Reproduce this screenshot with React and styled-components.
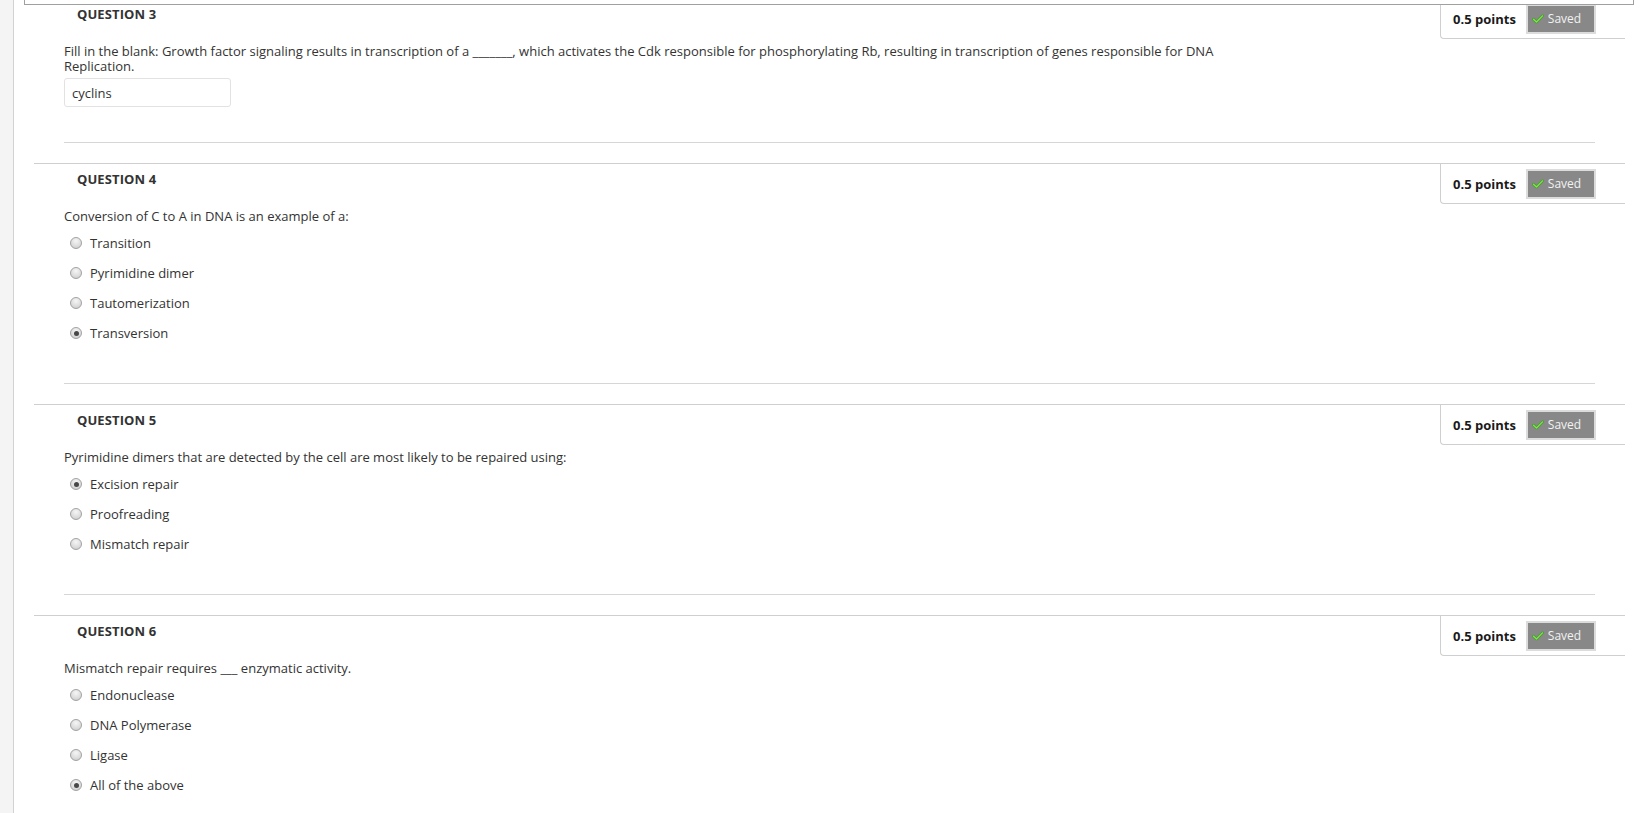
import React from "react";
import styled, { createGlobalStyle } from "styled-components";

const GlobalStyle = createGlobalStyle`
  html, body { margin: 0; padding: 0; background: #fff; }
  body { font-family: "Open Sans", "Liberation Sans", sans-serif; color: #333; }
  * { box-sizing: border-box; }
`;

const Page = styled.div`
  display: flex;
  height: 813px;
  overflow: hidden;
`;

const SideStrip = styled.div`
  width: 14px;
  flex: none;
  background: #f4f4f4;
  border-right: 1px solid #d2d2d2;
`;

const Main = styled.div`
  flex: 1;
  display: block;
`;

const TopBox = styled.div`
  position: relative;
  z-index: 1;
  margin-left: 10px;
  width: 1610px;
  height: 5px;
  background: #fff;
  border: 1px solid #a0a0a0;
  border-top: none;
`;

const Section = styled.section`
  position: relative;
  margin-left: 20px;
  width: 1591px;
  border-top: 1px solid #cfcfcf;
  margin-top: ${(p) => p.$offset || 0}px;
`;

const Header = styled.div`
  display: flex;
  justify-content: space-between;
  align-items: flex-start;
  height: 40px;
`;

const QuestionLabel = styled.h3`
  margin: 0;
  padding-left: 43px;
  font-size: 13px;
  line-height: 30px;
  font-weight: 700;
  color: #333;
  letter-spacing: 0.1px;
`;

const PointsBox = styled.div`
  width: 185px;
  height: 40px;
  display: flex;
  align-items: center;
  padding-left: 12px;
  border-left: 1px solid #cfcfcf;
  border-bottom: 1px solid #cfcfcf;
  border-bottom-left-radius: 4px;
`;

const Points = styled.span`
  font-size: 13px;
  font-weight: 700;
  color: #1a1a1a;
  white-space: nowrap;
`;

const SavedBadge = styled.span`
  margin-left: 10px;
  width: 70px;
  height: 30px;
  display: flex;
  align-items: center;
  padding-left: 4px;
  gap: 4px;
  background: #888;
  border: 2px solid #dcdcdc;
  color: #f2f2f2;
  font-size: 12px;
`;

const Body = styled.div`
  padding-left: 30px;
`;

const Prompt = styled.div`
  margin-top: 5px;
  max-width: 1190px;
  font-size: 13px;
  line-height: 15px;
  color: #333;
`;

const AnswerInput = styled.div`
  margin-top: 4px;
  width: 167px;
  height: 29px;
  border: 1px solid #e2e2e2;
  border-radius: 3px;
  padding: 0 7px;
  display: flex;
  align-items: center;
  font-size: 13px;
  color: #333;
`;

const Options = styled.div`
  margin-top: 4px;
  display: flex;
  flex-direction: column;
`;

const OptionRow = styled.label`
  height: 30px;
  display: flex;
  align-items: center;
  font-size: 13px;
  color: #333;
`;

const Radio = styled.span`
  width: 12px;
  height: 12px;
  margin-left: 6px;
  margin-right: 8px;
  border-radius: 50%;
  border: 1px solid #a2a2a2;
  background: radial-gradient(circle at 50% 30%, #f6f6f6 0%, #dcdcdc 60%, #c6c6c6 100%);
  display: flex;
  align-items: center;
  justify-content: center;
  flex: none;
  &::after {
    content: "";
    width: 5px;
    height: 5px;
    border-radius: 50%;
    background: ${(p) => (p.$checked ? "#474747" : "transparent")};
  }
`;

const Divider = styled.hr`
  margin: ${(p) => p.$gap}px 0 20px 0;
  width: 1531px;
  border: none;
  border-top: 1px solid #d6d6d6;
  height: 0;
`;

const Check = () => (
  <svg width="12" height="10" viewBox="0 0 12 10">
    <polyline points="1.5,5.2 4.5,8 10.5,1.8" fill="none" stroke="#3aa51e" strokeWidth="2.6" strokeLinecap="round" strokeLinejoin="round" />
    <polyline points="1.5,5.2 4.5,8 10.5,1.8" fill="none" stroke="#8be05a" strokeWidth="1.2" strokeLinecap="round" strokeLinejoin="round" />
  </svg>
);

const QuestionHeader = ({ n }) => (
  <Header>
    <QuestionLabel>QUESTION {n}</QuestionLabel>
    <PointsBox>
      <Points>0.5 points</Points>
      <SavedBadge>
        <Check />
        Saved
      </SavedBadge>
    </PointsBox>
  </Header>
);

const questions = [
  {
    n: 4,
    text: "Conversion of C to A in DNA is an example of a:",
    options: ["Transition", "Pyrimidine dimer", "Tautomerization", "Transversion"],
    checked: 3,
  },
  {
    n: 5,
    text: "Pyrimidine dimers that are detected by the cell are most likely to be repaired using:",
    options: ["Excision repair", "Proofreading", "Mismatch repair"],
    checked: 0,
  },
  {
    n: 6,
    text: "Mismatch repair requires ___ enzymatic activity.",
    options: ["Endonuclease", "DNA Polymerase", "Ligase", "All of the above"],
    checked: 3,
  },
];

export default function App() {
  return (
    <>
      <GlobalStyle />
      <Page>
        <SideStrip />
        <Main>
          <TopBox />
          <Section $offset={-7}>
            <QuestionHeader n={3} />
            <Body>
              <Prompt>
                Fill in the blank: Growth factor signaling results in transcription of a _______, which activates the Cdk
                responsible for phosphorylating Rb, resulting in transcription of genes responsible for DNA Replication.
              </Prompt>
              <AnswerInput>cyclins</AnswerInput>
              <Divider $gap={35} />
            </Body>
          </Section>
          {questions.map((q) => (
            <Section key={q.n}>
              <QuestionHeader n={q.n} />
              <Body>
                <Prompt>{q.text}</Prompt>
                <Options>
                  {q.options.map((o, i) => (
                    <OptionRow key={o}>
                      <Radio $checked={i === q.checked} />
                      {o}
                    </OptionRow>
                  ))}
                </Options>
                <Divider $gap={35} />
              </Body>
            </Section>
          ))}
        </Main>
      </Page>
    </>
  );
}
